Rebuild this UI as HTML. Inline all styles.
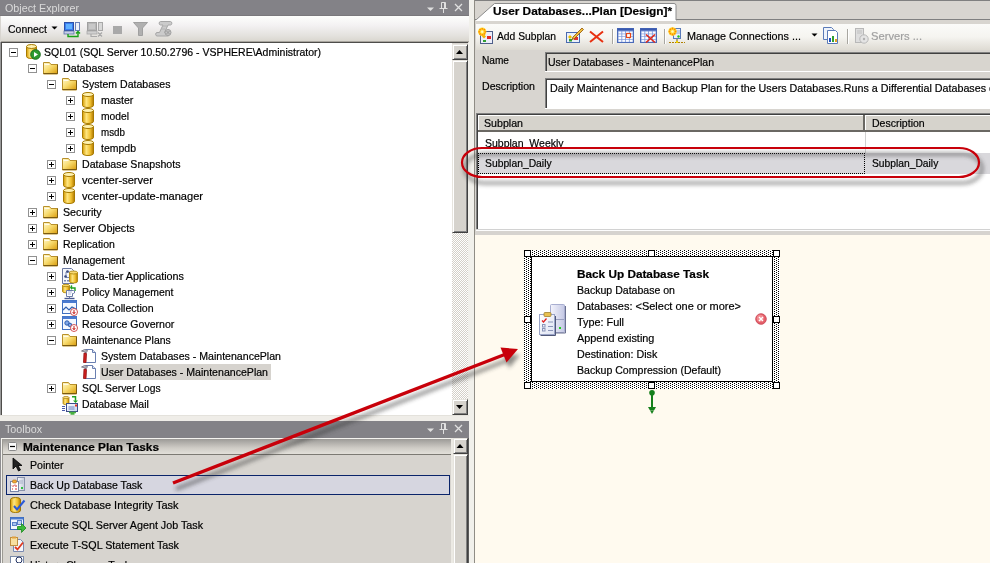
<!DOCTYPE html>
<html><head><meta charset="utf-8"><title>SSMS</title>
<style>
*{box-sizing:border-box;margin:0;padding:0}
html,body{width:990px;height:563px;overflow:hidden}
body{position:relative;background:#d8d5d0;font:11px "Liberation Sans",sans-serif;color:#000}
.a{position:absolute;display:block}
.t{position:absolute;white-space:nowrap;line-height:16px;height:16px;-webkit-text-stroke:0.2px currentColor}
</style></head><body>
<svg width="0" height="0" style="position:absolute">
<defs>
<linearGradient id="gFold" x1="0" y1="0" x2="1" y2="1"><stop offset="0" stop-color="#fff8d0"/><stop offset="0.45" stop-color="#f8dc70"/><stop offset="1" stop-color="#d89a08"/></linearGradient>
<linearGradient id="gCyl" x1="0" y1="0" x2="1" y2="0"><stop offset="0" stop-color="#d49a00"/><stop offset="0.35" stop-color="#ffe680"/><stop offset="0.7" stop-color="#f0c030"/><stop offset="1" stop-color="#b07800"/></linearGradient>
<pattern id="hatch" width="4" height="2" patternUnits="userSpaceOnUse"><rect width="4" height="2" fill="#fff"/><rect width="1" height="1" fill="#000"/><rect x="2" y="1" width="1" height="1" fill="#000"/></pattern>
<pattern id="chk" width="2" height="2" patternUnits="userSpaceOnUse"><rect width="2" height="2" fill="#fff"/><rect width="1" height="1" fill="#d4d0c8"/><rect x="1" y="1" width="1" height="1" fill="#d4d0c8"/></pattern>
<radialGradient id="gSun"><stop offset="0" stop-color="#fff080"/><stop offset="0.6" stop-color="#ffc820"/><stop offset="1" stop-color="#f08000"/></radialGradient>
<filter id="shd" x="-20%" y="-50%" width="140%" height="200%"><feGaussianBlur stdDeviation="2.2"/></filter>
</defs></svg>
<svg width="0" height="0" style="position:absolute"><defs>
<symbol id="ic_dtier" viewBox="0 0 16 16"><path d="M0.5 0.5h9l2 2v13h-11z" fill="#f4f6fb" stroke="#6a78a0"/><path d="M4 4v5.5h3M4 4h4" stroke="#7a88b0" fill="none"/><circle cx="5.5" cy="3.5" r="1.3" fill="#3a4a80"/><circle cx="3.5" cy="8.5" r="1.3" fill="#3a4a80"/><rect x="2" y="12" width="2" height="1.5" fill="#7a88b0"/><rect x="5" y="12" width="2" height="1.5" fill="#7a88b0"/><path d="M7.5 4.5v9a4 1.5 0 0 0 8 0v-9" fill="url(#gCyl)" stroke="#a88000" stroke-width="0.8"/><ellipse cx="11.5" cy="4.5" rx="4" ry="1.5" fill="#f8d870" stroke="#a88000" stroke-width="0.8"/></symbol>
<symbol id="ic_policy" viewBox="0 0 16 16"><path d="M0.5 1.5v6a3.5 1.3 0 0 0 7 0v-6" fill="url(#gCyl)" stroke="#a88000" stroke-width="0.8"/><ellipse cx="4" cy="1.5" rx="3.5" ry="1.2" fill="#f8d870" stroke="#a88000" stroke-width="0.8"/><path d="M9.5 1.5v2.5h3.5v3" stroke="#20a020" stroke-width="1.4" fill="none"/><path d="M8 3.5l2-2.5v5z" fill="#20a020"/><path d="M4.5 6.5h7c1.5 0 1.5 3 0 3h-1v3h-6z" fill="#fff" stroke="#6a7aa8"/><path d="M6 8h4M6 10h3" stroke="#a8b4d8"/><path d="M2.5 14.5h10" stroke="#4a5a90" stroke-width="1.4"/><path d="M7.5 12.5v2" stroke="#6a7aa8"/></symbol>
<symbol id="ic_dcoll" viewBox="0 0 16 16"><rect x="0.5" y="0.5" width="14" height="13" fill="#f4f8ff" stroke="#4070c0"/><rect x="0.5" y="0.5" width="14" height="2.5" fill="#4a7ad0"/><path d="M1 10l3-3l3 3l3-3l4 2" stroke="#3060b0" fill="none" stroke-width="1.2"/><circle cx="12" cy="12" r="3.5" fill="#fff" stroke="#d04040" stroke-width="0.9"/><path d="M12 10v3.5M10.7 12l1.3 1.8l1.3-1.8" stroke="#c82020" fill="none" stroke-width="1"/></symbol>
<symbol id="ic_rgov" viewBox="0 0 16 16"><rect x="0.5" y="0.5" width="14" height="13" fill="#f4f8ff" stroke="#4070c0"/><rect x="0.5" y="0.5" width="14" height="2.5" fill="#4a7ad0"/><circle cx="5" cy="7" r="2.2" fill="#80a8e8" stroke="#3060b0"/><circle cx="8" cy="9" r="1.8" fill="#80a8e8" stroke="#3060b0"/><circle cx="12" cy="12" r="3.5" fill="#fff" stroke="#d04040" stroke-width="0.9"/><path d="M12 10v3.5M10.7 12l1.3 1.8l1.3-1.8" stroke="#c82020" fill="none" stroke-width="1"/></symbol>
<symbol id="ic_plan" viewBox="0 0 16 16"><path d="M4.5 1.5h7l3 3v10h-10z" fill="#fff" stroke="#6a7fb0"/><path d="M11.5 1.5v3h3" fill="#dfe6f4" stroke="#6a7fb0"/><path d="M0.5 3l3-1.5l3 1l-1 2z" fill="#b8b8c0" stroke="#707080" stroke-width="0.8"/><path d="M3 5l-0.5 9.5h2.5l0.5-9z" fill="#d02020" stroke="#901010" stroke-width="0.8"/></symbol>
<symbol id="ic_mail" viewBox="0 0 16 19"><defs><linearGradient id="gMon" x1="0" y1="0" x2="1" y2="1"><stop offset="0" stop-color="#ffffff"/><stop offset="1" stop-color="#c8d4f0"/></linearGradient></defs><path d="M1 1.5v6a3 1.2 0 0 0 6 0v-6" fill="url(#gCyl)" stroke="#b08a20" stroke-width="0.8"/><ellipse cx="4" cy="1.5" rx="3" ry="1.1" fill="#f8dc80" stroke="#b08a20" stroke-width="0.8"/><path d="M10 0.8h3.5v4" stroke="#20a020" stroke-width="1.5" fill="none"/><path d="M11 4.5h5l-2.5 2.5z" fill="#20a020"/><rect x="4.5" y="7.5" width="11" height="8" fill="url(#gMon)" stroke="#3c4c88"/><rect x="13" y="8.5" width="2" height="2" fill="#e83020"/><path d="M6.5 11h6M6.5 13h6" stroke="#6a80c0"/><path d="M0 10.5h3M0 12.5h3M0 14.5h3" stroke="#4a5aa8"/><path d="M7 16.5h7M8.5 18h4" stroke="#48b040" stroke-width="1.4"/></symbol>
</defs></svg>
<div class="a" style="left:0px;top:0px;width:469px;height:16px;background:#838287"></div>
<div class="a" style="left:0px;top:15px;width:469px;height:1px;background:#7a787c"></div>
<svg class="a" style="left:425px;top:0px" width="44" height="16" viewBox="0 0 44 16"><path d="M2 7.5h7l-3.5 3.5z" fill="#e0e0e0"/><path d="M16.5 2.5h4v6h-4zM14.5 8.5h8M18.5 9v4" stroke="#e0e0e0" fill="none"/><path d="M19.5 3v5" stroke="#e0e0e0"/><path d="M30 4l7 7M37 4l-7 7" stroke="#e0e0e0" stroke-width="1.3"/></svg>
<div class="a" style="left:1px;top:16px;width:468px;height:26px;background:linear-gradient(#fdfefc,#f4f2f3 35%,#e4e2de 75%,#d8d5cd)"></div>
<div class="a" style="left:1px;top:41px;width:468px;height:1px;background:#a9a69f"></div>
<div class="a" style="left:0px;top:42px;width:468px;height:1px;background:#4e4d4a"></div>
<svg class="a" style="left:51px;top:26px" width="7" height="5" viewBox="0 0 7 5"><path d="M0.5 0.5h6l-3 3z" fill="#000"/></svg>
<svg class="a" style="left:63px;top:21px" width="19" height="17" viewBox="0 0 19 17"><rect x="1.5" y="1.5" width="9" height="8" fill="#3a7ef0" stroke="#2a4fa8"/><rect x="3" y="3" width="6" height="5" fill="#60b0ff"/><rect x="1" y="10" width="10" height="3" fill="#c8d0e8" stroke="#5a6fa8" stroke-width="0.8"/><rect x="12.5" y="1.5" width="4" height="8" fill="#eef2fa" stroke="#6a7fb8"/><path d="M5 13v2.5h10v-4M13 12.5l2 -2l2 2" stroke="#18a018" stroke-width="1.4" fill="none"/></svg>
<svg class="a" style="left:86px;top:21px" width="19" height="17" viewBox="0 0 19 17"><rect x="1.5" y="1.5" width="9" height="8" fill="#b8b8b8" stroke="#a0a0a0"/><rect x="3" y="3" width="6" height="5" fill="#c8c8c8"/><rect x="1" y="10" width="10" height="3" fill="#d0d0d0" stroke="#a8a8a8" stroke-width="0.8"/><rect x="12.5" y="1.5" width="4" height="8" fill="#d8d8d8" stroke="#a8a8a8"/><path d="M5 13v2.5h6M12 11.5l4 4M16 11.5l-4 4" stroke="#a8a8a8" stroke-width="1.2" fill="none"/></svg>
<div class="a" style="left:113px;top:26px;width:9px;height:8px;background:#a9a9a9"></div>
<svg class="a" style="left:133px;top:22px" width="16" height="14" viewBox="0 0 16 14"><path d="M0.5 0.5h14l-5 5.5v7.5h-4v-7.5z" fill="#b0b0b0" stroke="#a0a0a0"/></svg>
<svg class="a" style="left:155px;top:20px" width="18" height="18" viewBox="0 0 18 18"><path d="M5.5 1.5h10c1.8 0 1.8 3.5 0 3.5h-2.5l-3.5 7.5h3.5c1.8 0 1.8 3.5 0 3.5h-11c-1.8 0-1.8-3.5 0-3.5h2.5l3.5-7.5h-2.5c-1.8 0-1.8-3.5 0-3.5z" fill="#cbcbcb" stroke="#a6a6a6"/><path d="M7 6h5M6 9h4" stroke="#b4b4b4"/><circle cx="13" cy="12.5" r="3" fill="#c4c4c4" stroke="#a0a0a0"/><path d="M11.5 11l3 3M14.5 11l-3 3" stroke="#9a9a9a"/></svg>
<div class="a" style="left:0px;top:42px;width:1px;height:374px;background:#9a9a9a"></div>
<div class="a" style="left:1px;top:42px;width:1px;height:374px;background:#4e4d4a"></div>
<div class="a" style="left:2px;top:43px;width:450px;height:372px;background:#fff"></div>
<svg class="a" style="left:9px;top:48px" width="9" height="9" viewBox="0 0 9 9"><rect x="0.5" y="0.5" width="8" height="8" fill="#fff" stroke="#919191"/><path d="M2 4.5h5" stroke="#000"/></svg>
<svg class="a" style="left:25px;top:44px" width="17" height="17" viewBox="0 0 17 17"><path d="M1.5 2.5v10a5 2 0 0 0 10 0v-10" fill="url(#gCyl)" stroke="#a77a00"/><ellipse cx="6.5" cy="2.5" rx="5" ry="2" fill="#fff2b0" stroke="#a77a00"/><circle cx="10.5" cy="10.5" r="4.8" fill="#2f9a2f" stroke="#1c6e1c"/><path d="M9 8l4 2.5l-4 2.5z" fill="#fff"/></svg>
<svg class="a" style="left:28px;top:64px" width="9" height="9" viewBox="0 0 9 9"><rect x="0.5" y="0.5" width="8" height="8" fill="#fff" stroke="#919191"/><path d="M2 4.5h5" stroke="#000"/></svg>
<svg class="a" style="left:43px;top:62px" width="16" height="13" viewBox="0 0 16 13"><path d="M0.5 0.5h6l1.5 2h6.5v9.5h-14z" fill="url(#gFold)" stroke="#b8902a"/><path d="M0.5 11.5h14v-9" fill="none" stroke="#7a5a10"/><path d="M1.5 2.5h5" stroke="#fffbe8"/></svg>
<svg class="a" style="left:47px;top:80px" width="9" height="9" viewBox="0 0 9 9"><rect x="0.5" y="0.5" width="8" height="8" fill="#fff" stroke="#919191"/><path d="M2 4.5h5" stroke="#000"/></svg>
<svg class="a" style="left:62px;top:78px" width="16" height="13" viewBox="0 0 16 13"><path d="M0.5 0.5h6l1.5 2h6.5v9.5h-14z" fill="url(#gFold)" stroke="#b8902a"/><path d="M0.5 11.5h14v-9" fill="none" stroke="#7a5a10"/><path d="M1.5 2.5h5" stroke="#fffbe8"/></svg>
<svg class="a" style="left:66px;top:96px" width="9" height="9" viewBox="0 0 9 9"><rect x="0.5" y="0.5" width="8" height="8" fill="#fff" stroke="#919191"/><path d="M2 4.5h5" stroke="#000"/><path d="M4.5 2v5" stroke="#000"/></svg>
<svg class="a" style="left:82px;top:92px" width="12" height="16" viewBox="0 0 12 16"><path d="M0.5 2.5 v11 a5.5 2 0 0 0 11 0 v-11" fill="url(#gCyl)" stroke="#a77a00"/><ellipse cx="6.0" cy="2.5" rx="5.5" ry="2" fill="#fff2b0" stroke="#a77a00"/></svg>
<svg class="a" style="left:66px;top:112px" width="9" height="9" viewBox="0 0 9 9"><rect x="0.5" y="0.5" width="8" height="8" fill="#fff" stroke="#919191"/><path d="M2 4.5h5" stroke="#000"/><path d="M4.5 2v5" stroke="#000"/></svg>
<svg class="a" style="left:82px;top:108px" width="12" height="16" viewBox="0 0 12 16"><path d="M0.5 2.5 v11 a5.5 2 0 0 0 11 0 v-11" fill="url(#gCyl)" stroke="#a77a00"/><ellipse cx="6.0" cy="2.5" rx="5.5" ry="2" fill="#fff2b0" stroke="#a77a00"/></svg>
<svg class="a" style="left:66px;top:128px" width="9" height="9" viewBox="0 0 9 9"><rect x="0.5" y="0.5" width="8" height="8" fill="#fff" stroke="#919191"/><path d="M2 4.5h5" stroke="#000"/><path d="M4.5 2v5" stroke="#000"/></svg>
<svg class="a" style="left:82px;top:124px" width="12" height="16" viewBox="0 0 12 16"><path d="M0.5 2.5 v11 a5.5 2 0 0 0 11 0 v-11" fill="url(#gCyl)" stroke="#a77a00"/><ellipse cx="6.0" cy="2.5" rx="5.5" ry="2" fill="#fff2b0" stroke="#a77a00"/></svg>
<svg class="a" style="left:66px;top:144px" width="9" height="9" viewBox="0 0 9 9"><rect x="0.5" y="0.5" width="8" height="8" fill="#fff" stroke="#919191"/><path d="M2 4.5h5" stroke="#000"/><path d="M4.5 2v5" stroke="#000"/></svg>
<svg class="a" style="left:82px;top:140px" width="12" height="16" viewBox="0 0 12 16"><path d="M0.5 2.5 v11 a5.5 2 0 0 0 11 0 v-11" fill="url(#gCyl)" stroke="#a77a00"/><ellipse cx="6.0" cy="2.5" rx="5.5" ry="2" fill="#fff2b0" stroke="#a77a00"/></svg>
<svg class="a" style="left:47px;top:160px" width="9" height="9" viewBox="0 0 9 9"><rect x="0.5" y="0.5" width="8" height="8" fill="#fff" stroke="#919191"/><path d="M2 4.5h5" stroke="#000"/><path d="M4.5 2v5" stroke="#000"/></svg>
<svg class="a" style="left:62px;top:158px" width="16" height="13" viewBox="0 0 16 13"><path d="M0.5 0.5h6l1.5 2h6.5v9.5h-14z" fill="url(#gFold)" stroke="#b8902a"/><path d="M0.5 11.5h14v-9" fill="none" stroke="#7a5a10"/><path d="M1.5 2.5h5" stroke="#fffbe8"/></svg>
<svg class="a" style="left:47px;top:176px" width="9" height="9" viewBox="0 0 9 9"><rect x="0.5" y="0.5" width="8" height="8" fill="#fff" stroke="#919191"/><path d="M2 4.5h5" stroke="#000"/><path d="M4.5 2v5" stroke="#000"/></svg>
<svg class="a" style="left:63px;top:172px" width="12" height="16" viewBox="0 0 12 16"><path d="M0.5 2.5 v11 a5.5 2 0 0 0 11 0 v-11" fill="url(#gCyl)" stroke="#a77a00"/><ellipse cx="6.0" cy="2.5" rx="5.5" ry="2" fill="#fff2b0" stroke="#a77a00"/></svg>
<svg class="a" style="left:47px;top:192px" width="9" height="9" viewBox="0 0 9 9"><rect x="0.5" y="0.5" width="8" height="8" fill="#fff" stroke="#919191"/><path d="M2 4.5h5" stroke="#000"/><path d="M4.5 2v5" stroke="#000"/></svg>
<svg class="a" style="left:63px;top:188px" width="12" height="16" viewBox="0 0 12 16"><path d="M0.5 2.5 v11 a5.5 2 0 0 0 11 0 v-11" fill="url(#gCyl)" stroke="#a77a00"/><ellipse cx="6.0" cy="2.5" rx="5.5" ry="2" fill="#fff2b0" stroke="#a77a00"/></svg>
<svg class="a" style="left:28px;top:208px" width="9" height="9" viewBox="0 0 9 9"><rect x="0.5" y="0.5" width="8" height="8" fill="#fff" stroke="#919191"/><path d="M2 4.5h5" stroke="#000"/><path d="M4.5 2v5" stroke="#000"/></svg>
<svg class="a" style="left:43px;top:206px" width="16" height="13" viewBox="0 0 16 13"><path d="M0.5 0.5h6l1.5 2h6.5v9.5h-14z" fill="url(#gFold)" stroke="#b8902a"/><path d="M0.5 11.5h14v-9" fill="none" stroke="#7a5a10"/><path d="M1.5 2.5h5" stroke="#fffbe8"/></svg>
<svg class="a" style="left:28px;top:224px" width="9" height="9" viewBox="0 0 9 9"><rect x="0.5" y="0.5" width="8" height="8" fill="#fff" stroke="#919191"/><path d="M2 4.5h5" stroke="#000"/><path d="M4.5 2v5" stroke="#000"/></svg>
<svg class="a" style="left:43px;top:222px" width="16" height="13" viewBox="0 0 16 13"><path d="M0.5 0.5h6l1.5 2h6.5v9.5h-14z" fill="url(#gFold)" stroke="#b8902a"/><path d="M0.5 11.5h14v-9" fill="none" stroke="#7a5a10"/><path d="M1.5 2.5h5" stroke="#fffbe8"/></svg>
<svg class="a" style="left:28px;top:240px" width="9" height="9" viewBox="0 0 9 9"><rect x="0.5" y="0.5" width="8" height="8" fill="#fff" stroke="#919191"/><path d="M2 4.5h5" stroke="#000"/><path d="M4.5 2v5" stroke="#000"/></svg>
<svg class="a" style="left:43px;top:238px" width="16" height="13" viewBox="0 0 16 13"><path d="M0.5 0.5h6l1.5 2h6.5v9.5h-14z" fill="url(#gFold)" stroke="#b8902a"/><path d="M0.5 11.5h14v-9" fill="none" stroke="#7a5a10"/><path d="M1.5 2.5h5" stroke="#fffbe8"/></svg>
<svg class="a" style="left:28px;top:256px" width="9" height="9" viewBox="0 0 9 9"><rect x="0.5" y="0.5" width="8" height="8" fill="#fff" stroke="#919191"/><path d="M2 4.5h5" stroke="#000"/></svg>
<svg class="a" style="left:43px;top:254px" width="16" height="13" viewBox="0 0 16 13"><path d="M0.5 0.5h6l1.5 2h6.5v9.5h-14z" fill="url(#gFold)" stroke="#b8902a"/><path d="M0.5 11.5h14v-9" fill="none" stroke="#7a5a10"/><path d="M1.5 2.5h5" stroke="#fffbe8"/></svg>
<svg class="a" style="left:47px;top:272px" width="9" height="9" viewBox="0 0 9 9"><rect x="0.5" y="0.5" width="8" height="8" fill="#fff" stroke="#919191"/><path d="M2 4.5h5" stroke="#000"/><path d="M4.5 2v5" stroke="#000"/></svg>
<!--icon dtier 14-->
<svg class="a" style="left:62px;top:268px" width="16" height="16" viewBox="0 0 16 16"><use href="#ic_dtier" width="16" height="16"/></svg>
<svg class="a" style="left:47px;top:288px" width="9" height="9" viewBox="0 0 9 9"><rect x="0.5" y="0.5" width="8" height="8" fill="#fff" stroke="#919191"/><path d="M2 4.5h5" stroke="#000"/><path d="M4.5 2v5" stroke="#000"/></svg>
<!--icon policy 15-->
<svg class="a" style="left:62px;top:284px" width="16" height="16" viewBox="0 0 16 16"><use href="#ic_policy" width="16" height="16"/></svg>
<svg class="a" style="left:47px;top:304px" width="9" height="9" viewBox="0 0 9 9"><rect x="0.5" y="0.5" width="8" height="8" fill="#fff" stroke="#919191"/><path d="M2 4.5h5" stroke="#000"/><path d="M4.5 2v5" stroke="#000"/></svg>
<!--icon dcoll 16-->
<svg class="a" style="left:62px;top:300px" width="16" height="16" viewBox="0 0 16 16"><use href="#ic_dcoll" width="16" height="16"/></svg>
<svg class="a" style="left:47px;top:320px" width="9" height="9" viewBox="0 0 9 9"><rect x="0.5" y="0.5" width="8" height="8" fill="#fff" stroke="#919191"/><path d="M2 4.5h5" stroke="#000"/><path d="M4.5 2v5" stroke="#000"/></svg>
<!--icon rgov 17-->
<svg class="a" style="left:62px;top:316px" width="16" height="16" viewBox="0 0 16 16"><use href="#ic_rgov" width="16" height="16"/></svg>
<svg class="a" style="left:47px;top:336px" width="9" height="9" viewBox="0 0 9 9"><rect x="0.5" y="0.5" width="8" height="8" fill="#fff" stroke="#919191"/><path d="M2 4.5h5" stroke="#000"/></svg>
<svg class="a" style="left:62px;top:334px" width="16" height="13" viewBox="0 0 16 13"><path d="M0.5 0.5h6l1.5 2h6.5v9.5h-14z" fill="url(#gFold)" stroke="#b8902a"/><path d="M0.5 11.5h14v-9" fill="none" stroke="#7a5a10"/><path d="M1.5 2.5h5" stroke="#fffbe8"/></svg>
<!--icon plan 19-->
<svg class="a" style="left:81px;top:348px" width="16" height="16" viewBox="0 0 16 16"><use href="#ic_plan" width="16" height="16"/></svg>
<!--icon plan 20-->
<svg class="a" style="left:81px;top:364px" width="16" height="16" viewBox="0 0 16 16"><use href="#ic_plan" width="16" height="16"/></svg>
<div class="a" style="left:100px;top:364px;width:171px;height:16px;background:#d6d3ce"></div>
<svg class="a" style="left:47px;top:384px" width="9" height="9" viewBox="0 0 9 9"><rect x="0.5" y="0.5" width="8" height="8" fill="#fff" stroke="#919191"/><path d="M2 4.5h5" stroke="#000"/><path d="M4.5 2v5" stroke="#000"/></svg>
<svg class="a" style="left:62px;top:382px" width="16" height="13" viewBox="0 0 16 13"><path d="M0.5 0.5h6l1.5 2h6.5v9.5h-14z" fill="url(#gFold)" stroke="#b8902a"/><path d="M0.5 11.5h14v-9" fill="none" stroke="#7a5a10"/><path d="M1.5 2.5h5" stroke="#fffbe8"/></svg>
<!--icon mail 22-->
<svg class="a" style="left:62px;top:396px" width="16" height="19" viewBox="0 0 16 19"><use href="#ic_mail" width="16" height="19"/></svg>
<svg class="a" style="left:452px;top:233px" width="16" height="166"><rect width="16" height="166" fill="url(#chk)"/></svg>
<div class="a" style="left:452px;top:44px;width:16px;height:16px;background:#d6d3cd;border:1px solid;border-color:#e6e4de #404040 #404040 #e6e4de;box-shadow:inset 1px 1px #fff,inset -1px -1px #808080"></div>
<svg class="a" style="left:452px;top:44px" width="16" height="16" viewBox="0 0 16 16"><path d="M4 10h7l-3.5-4z" fill="#000"/></svg>
<div class="a" style="left:452px;top:60px;width:16px;height:173px;background:#d6d3cd;border:1px solid;border-color:#e6e4de #404040 #404040 #e6e4de;box-shadow:inset 1px 1px #fff,inset -1px -1px #808080"></div>
<div class="a" style="left:452px;top:399px;width:16px;height:16px;background:#d6d3cd;border:1px solid;border-color:#e6e4de #404040 #404040 #e6e4de;box-shadow:inset 1px 1px #fff,inset -1px -1px #808080"></div>
<svg class="a" style="left:452px;top:399px" width="16" height="16" viewBox="0 0 16 16"><path d="M4 6h7l-3.5 4z" fill="#000"/></svg>
<div class="a" style="left:469px;top:0px;width:5px;height:563px;background:#f1f0eb"></div>
<div class="a" style="left:468px;top:43px;width:1px;height:372px;background:#f1f0eb"></div>
<div class="a" style="left:474px;top:0px;width:1px;height:563px;background:#8f8c85"></div>
<div class="a" style="left:0px;top:415px;width:469px;height:1px;background:#e4e2dc"></div>
<div class="a" style="left:0px;top:416px;width:469px;height:5px;background:#efede8"></div>
<div class="a" style="left:0px;top:421px;width:469px;height:17px;background:#838287"></div>
<svg class="a" style="left:425px;top:421px" width="44" height="16" viewBox="0 0 44 16"><path d="M2 7.5h7l-3.5 3.5z" fill="#e0e0e0"/><path d="M16.5 2.5h4v6h-4zM14.5 8.5h8M18.5 9v4" stroke="#e0e0e0" fill="none"/><path d="M19.5 3v5" stroke="#e0e0e0"/><path d="M30 4l7 7M37 4l-7 7" stroke="#e0e0e0" stroke-width="1.3"/></svg>
<div class="a" style="left:0px;top:438px;width:1px;height:125px;background:#8e8d90"></div>
<div class="a" style="left:1px;top:438px;width:1px;height:125px;background:#f4f3ef"></div>
<div class="a" style="left:2px;top:438px;width:1px;height:125px;background:#9c9a94"></div>
<div class="a" style="left:3px;top:438px;width:449px;height:125px;background:#d7d4cf"></div>
<div class="a" style="left:1px;top:438px;width:451px;height:1px;background:#f4f3ef"></div>
<div class="a" style="left:3px;top:439px;width:449px;height:15px;background:linear-gradient(#9c9a97,#cfccc6 60%,#e2e0da)"></div>
<div class="a" style="left:3px;top:454px;width:449px;height:1px;background:#7c7a74"></div>
<svg class="a" style="left:8px;top:442px" width="9" height="9" viewBox="0 0 9 9"><rect x="0.5" y="0.5" width="8" height="8" rx="1" fill="#fbfbfa" stroke="#8a8a8a"/><path d="M2 4.5h5" stroke="#000" stroke-width="1.2"/></svg>
<svg class="a" style="left:12px;top:457px" width="10" height="15" viewBox="0 0 10 15"><path d="M1 1v11l3-3l2.5 5l2-1l-2.5-4.5h4z" fill="#222" stroke="#000" stroke-width="0.8"/></svg>
<div class="a" style="left:6px;top:475px;width:444px;height:20px;background:#d6d6e0;border:1px solid #0a246a"></div>
<svg class="a" style="left:10px;top:477px" width="15" height="16" viewBox="0 0 15 16"><defs><linearGradient id="gTw" x1="0" x2="1"><stop offset="0" stop-color="#fafbfd"/><stop offset="1" stop-color="#c4cada"/></linearGradient></defs><rect x="7.5" y="0.5" width="7" height="13" fill="url(#gTw)" stroke="#8a92aa"/><path d="M9 4h4M9 6h4" stroke="#a8b0c8"/><rect x="11" y="10" width="2" height="2" fill="#30c040"/><rect x="0.5" y="4.5" width="8" height="10" fill="#fff" stroke="#7a86a8"/><rect x="2.5" y="3" width="4" height="3" rx="1" fill="#f0a838" stroke="#b07020" stroke-width="0.6"/><path d="M2 8.5l1 1l2-2M2 12h1M5 9h2M5 12h2" stroke="#d02828" fill="none"/></svg>
<svg class="a" style="left:9px;top:497px" width="17" height="16" viewBox="0 0 17 16"><path d="M1.5 2.5q0-2 5-2q5 0 5 2v11q0 2-5 2q-5 0-5-2z" fill="url(#gCyl)" stroke="#a07400"/><path d="M5 9l3 3.5l7.5-9" stroke="#2a5ad8" stroke-width="2" fill="none"/></svg>
<svg class="a" style="left:9px;top:516px" width="18" height="17" viewBox="0 0 18 17"><rect x="1.5" y="1.5" width="13" height="12" fill="#f2f6fd" stroke="#3a6ab8"/><rect x="1.5" y="1.5" width="13" height="2" fill="#4a7ad0"/><rect x="3.5" y="6.5" width="4" height="3" fill="#a8c4f0" stroke="#5a80c8"/><rect x="8.5" y="4.5" width="4" height="4" fill="#c8d8f4" stroke="#5a80c8"/><path d="M8.5 10.5h4v-3l4.5 4.5l-4.5 4.5v-3h-4z" fill="#3cba3c" stroke="#1a8a1a" stroke-width="0.8"/></svg>
<svg class="a" style="left:10px;top:536px" width="16" height="17" viewBox="0 0 16 17"><path d="M3.5 3.5h7l3 3v9h-10z" fill="#f4f6fb" stroke="#7a8ab0"/><rect x="0.5" y="1.5" width="7" height="8" fill="#f8e0a0" stroke="#c09040"/><rect x="2" y="0.5" width="4" height="2" fill="#e0a040"/><path d="M5 11l2.5 2.5l5.5-7" stroke="#e03a20" stroke-width="1.8" fill="none"/></svg>
<svg class="a" style="left:10px;top:556px" width="16" height="10" viewBox="0 0 16 10"><rect x="0.5" y="0.5" width="13" height="12" fill="#fff" stroke="#7a8aa8"/><circle cx="9" cy="4" r="3" fill="#fff" stroke="#203060"/></svg>
<div class="a" style="left:451px;top:438px;width:2px;height:125px;background:#eceae4"></div>
<div class="a" style="left:453px;top:438px;width:15px;height:16px;background:#d6d3cd;border:1px solid;border-color:#e6e4de #404040 #404040 #e6e4de;box-shadow:inset 1px 1px #fff,inset -1px -1px #808080"></div>
<svg class="a" style="left:453px;top:438px" width="15" height="16" viewBox="0 0 15 16"><path d="M3.5 10h7l-3.5-4z" fill="#000"/></svg>
<div class="a" style="left:453px;top:454px;width:15px;height:120px;background:#d6d3cd;border:1px solid;border-color:#e6e4de #404040 #404040 #e6e4de;box-shadow:inset 1px 1px #fff,inset -1px -1px #808080"></div>
<div class="a" style="left:468px;top:438px;width:1px;height:125px;background:#5a5a5a"></div>
<div class="a" style="left:475px;top:0px;width:515px;height:563px;background:#d8d5d0"></div>
<div class="a" style="left:475px;top:0px;width:515px;height:1px;background:#808080"></div>
<div class="a" style="left:475px;top:19px;width:515px;height:1px;background:#808080"></div>
<svg class="a" style="left:475px;top:2px" width="205" height="19" viewBox="0 0 205 19"><path d="M1.5 17.5L19.5 1.5h179.5a2 2 0 0 1 2 2v15H1.5z" fill="#fff" stroke="#8c8c8c"/><path d="M1 18.5h200" stroke="#fff"/></svg>
<div class="a" style="left:476px;top:24px;width:514px;height:26px;background:linear-gradient(#fbfbf9,#f5f4f0 50%,#dedbd3)"></div>
<svg class="a" style="left:477px;top:27px" width="17" height="17" viewBox="0 0 17 17"><rect x="3.5" y="4.5" width="12" height="12" fill="#eceefa" stroke="#4e5e88"/><circle cx="5.2" cy="4.8" r="4.2" fill="#ffe030"/><circle cx="8.20" cy="4.80" r="0.9" fill="#ff8800"/><circle cx="7.32" cy="6.92" r="0.9" fill="#ff8800"/><circle cx="5.20" cy="7.80" r="0.9" fill="#ff8800"/><circle cx="3.08" cy="6.92" r="0.9" fill="#ff8800"/><circle cx="2.20" cy="4.80" r="0.9" fill="#ff8800"/><circle cx="3.08" cy="2.68" r="0.9" fill="#ff8800"/><circle cx="5.20" cy="1.80" r="0.9" fill="#ff8800"/><circle cx="7.32" cy="2.68" r="0.9" fill="#ff8800"/><circle cx="5.2" cy="4.8" r="1.2" fill="#fff8c0"/><path d="M7 7.5l2 2l-2 2l-2-2z" fill="#f0b800"/><rect x="6" y="13" width="3" height="2" fill="#30a030"/><rect x="10" y="9" width="4" height="3" fill="#e02828"/></svg>
<svg class="a" style="left:566px;top:27px" width="18" height="17" viewBox="0 0 18 17"><rect x="0.5" y="5.5" width="13" height="10" fill="#eaf0fa" stroke="#4a6ab0"/><path d="M4 8l2 2l-2 2l-2-2z" fill="#f0c000"/><rect x="3" y="12" width="3" height="2.5" fill="#30a030"/><rect x="8" y="10" width="4" height="3" fill="#e03030"/><path d="M7 10l9-9l1.5 1.5l-9 9l-2.5 1z" fill="#f0c040" stroke="#905000" stroke-width="0.8"/></svg>
<svg class="a" style="left:588px;top:30px" width="17" height="13" viewBox="0 0 17 13"><path d="M2 1.5l13 10.5M15 1.5l-13 10.5" stroke="#e83010" stroke-width="2"/></svg>
<div class="a" style="left:612px;top:29px;width:1px;height:15px;background:#a8a6a0"></div>
<div class="a" style="left:613px;top:29px;width:1px;height:15px;background:#fff"></div>
<svg class="a" style="left:617px;top:28px" width="17" height="16" viewBox="0 0 17 16"><rect x="0.5" y="0.5" width="16" height="14" fill="#7c98dc" stroke="#4a6ab8"/><rect x="0.5" y="0.5" width="16" height="2" fill="#3a5ab0"/><rect x="1.50" y="3.50" width="2.9" height="2.1" fill="#fbfcff"/><rect x="1.50" y="6.25" width="2.9" height="2.1" fill="#fbfcff"/><rect x="1.50" y="9.00" width="2.9" height="2.1" fill="#fbfcff"/><rect x="1.50" y="11.75" width="2.9" height="2.1" fill="#fbfcff"/><rect x="5.25" y="3.50" width="2.9" height="2.1" fill="#fbfcff"/><rect x="5.25" y="6.25" width="2.9" height="2.1" fill="#fbfcff"/><rect x="5.25" y="9.00" width="2.9" height="2.1" fill="#fbfcff"/><rect x="5.25" y="11.75" width="2.9" height="2.1" fill="#fbfcff"/><rect x="9.00" y="3.50" width="2.9" height="2.1" fill="#fbfcff"/><rect x="9.00" y="6.25" width="2.9" height="2.1" fill="#fbfcff"/><rect x="9.00" y="9.00" width="2.9" height="2.1" fill="#fbfcff"/><rect x="9.00" y="11.75" width="2.9" height="2.1" fill="#fbfcff"/><rect x="12.75" y="3.50" width="2.9" height="2.1" fill="#fbfcff"/><rect x="12.75" y="6.25" width="2.9" height="2.1" fill="#fbfcff"/><rect x="12.75" y="9.00" width="2.9" height="2.1" fill="#fbfcff"/><rect x="12.75" y="11.75" width="2.9" height="2.1" fill="#fbfcff"/><rect x="9.5" y="5.5" width="4" height="4" fill="#fff" stroke="#e84818" stroke-width="1.2"/></svg>
<svg class="a" style="left:640px;top:28px" width="17" height="16" viewBox="0 0 17 16"><rect x="0.5" y="0.5" width="16" height="14" fill="#7c98dc" stroke="#4a6ab8"/><rect x="0.5" y="0.5" width="16" height="2" fill="#3a5ab0"/><rect x="1.50" y="3.50" width="2.9" height="2.1" fill="#fbfcff"/><rect x="1.50" y="6.25" width="2.9" height="2.1" fill="#fbfcff"/><rect x="1.50" y="9.00" width="2.9" height="2.1" fill="#fbfcff"/><rect x="1.50" y="11.75" width="2.9" height="2.1" fill="#fbfcff"/><rect x="5.25" y="3.50" width="2.9" height="2.1" fill="#fbfcff"/><rect x="5.25" y="6.25" width="2.9" height="2.1" fill="#fbfcff"/><rect x="5.25" y="9.00" width="2.9" height="2.1" fill="#fbfcff"/><rect x="5.25" y="11.75" width="2.9" height="2.1" fill="#fbfcff"/><rect x="9.00" y="3.50" width="2.9" height="2.1" fill="#fbfcff"/><rect x="9.00" y="6.25" width="2.9" height="2.1" fill="#fbfcff"/><rect x="9.00" y="9.00" width="2.9" height="2.1" fill="#fbfcff"/><rect x="9.00" y="11.75" width="2.9" height="2.1" fill="#fbfcff"/><rect x="12.75" y="3.50" width="2.9" height="2.1" fill="#fbfcff"/><rect x="12.75" y="6.25" width="2.9" height="2.1" fill="#fbfcff"/><rect x="12.75" y="9.00" width="2.9" height="2.1" fill="#fbfcff"/><rect x="12.75" y="11.75" width="2.9" height="2.1" fill="#fbfcff"/><path d="M6 6.5l9 8M15 6.5l-9 8" stroke="#e02818" stroke-width="1.6"/></svg>
<div class="a" style="left:664px;top:29px;width:1px;height:15px;background:#a8a6a0"></div>
<div class="a" style="left:665px;top:29px;width:1px;height:15px;background:#fff"></div>
<svg class="a" style="left:668px;top:27px" width="18" height="17" viewBox="0 0 18 17"><rect x="5.5" y="1.5" width="7" height="10" fill="#eaf0fa" stroke="#5a7ab8"/><path d="M6 4h6M6 6h6" stroke="#90a8d8"/><circle cx="10.5" cy="9.5" r="1.2" fill="#20c020"/><circle cx="4.5" cy="4.5" r="4.2" fill="#ffe030"/><circle cx="7.50" cy="4.50" r="0.9" fill="#ff8800"/><circle cx="6.62" cy="6.62" r="0.9" fill="#ff8800"/><circle cx="4.50" cy="7.50" r="0.9" fill="#ff8800"/><circle cx="2.38" cy="6.62" r="0.9" fill="#ff8800"/><circle cx="1.50" cy="4.50" r="0.9" fill="#ff8800"/><circle cx="2.38" cy="2.38" r="0.9" fill="#ff8800"/><circle cx="4.50" cy="1.50" r="0.9" fill="#ff8800"/><circle cx="6.62" cy="2.38" r="0.9" fill="#ff8800"/><circle cx="4.5" cy="4.5" r="1.2" fill="#fff8c0"/><path d="M1 15.5h16" stroke="#b08000" stroke-dasharray="2 1"/><path d="M9 12v3" stroke="#806000"/><rect x="8" y="14" width="2" height="2" fill="#f0d000"/></svg>
<svg class="a" style="left:811px;top:33px" width="7" height="4" viewBox="0 0 7 4"><path d="M0.5 0.5h6l-3 3z" fill="#000"/></svg>
<svg class="a" style="left:823px;top:27px" width="17" height="17" viewBox="0 0 17 17"><path d="M0.5 0.5h8l2 2v10h-10z" fill="#eef3fb" stroke="#5a7ab8"/><path d="M4.5 3.5h8l2 2v11h-10z" fill="#fff" stroke="#5a7ab8"/><rect x="6" y="11" width="2" height="4" fill="#2050c0"/><rect x="9" y="9" width="2" height="6" fill="#30a030"/><rect x="12" y="12" width="2" height="3" fill="#e0a020"/></svg>
<div class="a" style="left:847px;top:29px;width:1px;height:15px;background:#a8a6a0"></div>
<div class="a" style="left:848px;top:29px;width:1px;height:15px;background:#fff"></div>
<svg class="a" style="left:855px;top:28px" width="14" height="16" viewBox="0 0 14 16"><rect x="0.5" y="0.5" width="8" height="14" fill="#dedede" stroke="#b8b8b8"/><path d="M2 3h5M2 5h5" stroke="#c0c0c0"/><circle cx="9" cy="11" r="4.2" fill="#e4e4e4" stroke="#b8b8b8"/><circle cx="9" cy="11" r="1.2" fill="#b0b0b0"/></svg>
<div class="a" style="left:545px;top:52px;width:450px;height:19px;background:#d8d5cf;border-top:1px solid #808080;border-left:1px solid #808080;box-shadow:inset 1px 1px #404040"></div>
<div class="a" style="left:545px;top:71px;width:450px;height:1px;background:#fff"></div>
<div class="a" style="left:545px;top:78px;width:450px;height:30px;background:#fff;border-top:1px solid #808080;border-left:1px solid #808080;box-shadow:inset 1px 1px #404040"></div>
<div class="a" style="left:545px;top:108px;width:450px;height:1px;background:#fff"></div>
<div class="a" style="left:476px;top:113px;width:520px;height:116px;background:#fff;border-top:1px solid #808080;border-left:1px solid #808080;box-shadow:inset 1px 1px #404040"></div>
<div class="a" style="left:478px;top:115px;width:387px;height:17px;background:#d6d3cc;border-bottom:2px solid #6a6863;border-right:2px solid #6a6863;box-shadow:inset 1px 1px #fff"></div>
<div class="a" style="left:865px;top:115px;width:130px;height:17px;background:#d6d3cc;border-bottom:2px solid #6a6863;box-shadow:inset 1px 1px #fff"></div>
<div class="a" style="left:865px;top:132px;width:1px;height:41px;background:#d0d0d0"></div>
<div class="a" style="left:478px;top:153px;width:512px;height:21px;background:#d9d8dc"></div>
<div class="a" style="left:478px;top:153px;width:387px;height:21px;border:1px dotted #000"></div>
<div class="a" style="left:477px;top:229px;width:514px;height:1px;background:#d2d2d2"></div>
<div class="a" style="left:476px;top:230px;width:514px;height:1px;background:#fdfdfd"></div>
<div class="a" style="left:476px;top:231px;width:514px;height:4px;background:#d6d3cf"></div>
<div class="a" style="left:475px;top:235px;width:515px;height:328px;background:#fffaef"></div>
<svg class="a" style="left:524px;top:250px" width="257" height="140"><rect x="0" y="0" width="256" height="139" fill="url(#hatch)"/><rect x="7.5" y="6.5" width="241" height="125" fill="#fff" stroke="#000"/><rect x="0.5" y="0.5" width="6" height="6" fill="#fff" stroke="#000"/><rect x="0.5" y="66.5" width="6" height="6" fill="#fff" stroke="#000"/><rect x="0.5" y="132.5" width="6" height="6" fill="#fff" stroke="#000"/><rect x="124.5" y="0.5" width="6" height="6" fill="#fff" stroke="#000"/><rect x="124.5" y="132.5" width="6" height="6" fill="#fff" stroke="#000"/><rect x="249.5" y="0.5" width="6" height="6" fill="#fff" stroke="#000"/><rect x="249.5" y="66.5" width="6" height="6" fill="#fff" stroke="#000"/><rect x="249.5" y="132.5" width="6" height="6" fill="#fff" stroke="#000"/></svg>
<svg class="a" style="left:538px;top:302px" width="30" height="34" viewBox="0 0 30 34"><defs><linearGradient id="gTw2" x1="0" x2="1"><stop offset="0" stop-color="#f4f4fc"/><stop offset="1" stop-color="#c4c8e4"/></linearGradient><linearGradient id="gCb" x1="0" y1="0" x2="1" y2="1"><stop offset="0" stop-color="#ffffff"/><stop offset="1" stop-color="#dde2f2"/></linearGradient></defs><rect x="12.5" y="2.5" width="14" height="28" rx="1" fill="url(#gTw2)" stroke="#a8aed0"/><path d="M27.5 4v27h-14" stroke="#6a7090" fill="none"/><path d="M13 17.5h13" stroke="#9aa0c0"/><rect x="21" y="25" width="2" height="2" fill="#20d020"/><rect x="1.5" y="12.5" width="15" height="20" fill="url(#gCb)" stroke="#9aa4c8"/><path d="M17.5 14v19.5h-15" stroke="#505878" fill="none"/><rect x="6" y="10.5" width="7" height="4" rx="1" fill="#e8c050" stroke="#a08030" stroke-width="0.8"/><path d="M4 18.5l1.5 1.5l3-3.5" stroke="#e02020" fill="none" stroke-width="1.3"/><path d="M10 20h5M10 24.5h5M10 28.5h5" stroke="#8a94b8"/><rect x="4.5" y="22.5" width="2.5" height="2.5" fill="none" stroke="#8a94b8"/><rect x="4.5" y="26.5" width="2.5" height="2.5" fill="none" stroke="#8a94b8"/></svg>
<svg class="a" style="left:754px;top:312px" width="14" height="14" viewBox="0 0 14 14"><circle cx="7" cy="7" r="5.3" fill="#e4606a" stroke="#c84050" stroke-width="0.8"/><circle cx="6.3" cy="6.3" r="3.5" fill="#f28a90"/><path d="M5 5l4 4M9 5l-4 4" stroke="#fff" stroke-width="1.4"/></svg>
<svg class="a" style="left:645px;top:386px" width="14" height="30" viewBox="0 0 14 30"><path d="M7 7v14" stroke="#16801c" stroke-width="2"/><circle cx="7" cy="6.8" r="2.8" fill="#16801c"/><path d="M3 21h8l-4 7z" fill="#16801c"/><path d="M4 24.5h6" stroke="#fffaef" stroke-width="0.6" opacity="0.5"/></svg>
<div class="t" style="left:5px;top:0px;transform:scaleX(0.9761);transform-origin:0 0;color:#dadada;-webkit-text-stroke:0">Object Explorer</div>
<div class="t" style="left:8px;top:21px;transform:scaleX(0.9516);transform-origin:0 0;">Connect</div>
<div class="t" style="left:44px;top:44px;transform:scaleX(0.9552);transform-origin:0 0;">SQL01 (SQL Server 10.50.2796 - VSPHERE\Administrator)</div>
<div class="t" style="left:63px;top:60px;transform:scaleX(0.9697);transform-origin:0 0;">Databases</div>
<div class="t" style="left:82px;top:76px;transform:scaleX(0.9585);transform-origin:0 0;">System Databases</div>
<div class="t" style="left:101px;top:92px;transform:scaleX(0.9606);transform-origin:0 0;">master</div>
<div class="t" style="left:101px;top:108px;transform:scaleX(0.9343);transform-origin:0 0;">model</div>
<div class="t" style="left:101px;top:124px;transform:scaleX(0.8920);transform-origin:0 0;">msdb</div>
<div class="t" style="left:101px;top:140px;transform:scaleX(0.9536);transform-origin:0 0;">tempdb</div>
<div class="t" style="left:82px;top:156px;transform:scaleX(0.9644);transform-origin:0 0;">Database Snapshots</div>
<div class="t" style="left:82px;top:172px;transform:scaleX(1.0100);transform-origin:0 0;">vcenter-server</div>
<div class="t" style="left:82px;top:188px;transform:scaleX(1.0044);transform-origin:0 0;">vcenter-update-manager</div>
<div class="t" style="left:63px;top:204px;transform:scaleX(0.9711);transform-origin:0 0;">Security</div>
<div class="t" style="left:63px;top:220px;transform:scaleX(0.9856);transform-origin:0 0;">Server Objects</div>
<div class="t" style="left:63px;top:236px;transform:scaleX(0.9518);transform-origin:0 0;">Replication</div>
<div class="t" style="left:63px;top:252px;transform:scaleX(0.9608);transform-origin:0 0;">Management</div>
<div class="t" style="left:82px;top:268px;transform:scaleX(0.9812);transform-origin:0 0;">Data-tier Applications</div>
<div class="t" style="left:82px;top:284px;transform:scaleX(0.9471);transform-origin:0 0;">Policy Management</div>
<div class="t" style="left:82px;top:300px;transform:scaleX(0.9599);transform-origin:0 0;">Data Collection</div>
<div class="t" style="left:82px;top:316px;transform:scaleX(0.9625);transform-origin:0 0;">Resource Governor</div>
<div class="t" style="left:82px;top:332px;transform:scaleX(0.9480);transform-origin:0 0;">Maintenance Plans</div>
<div class="t" style="left:101px;top:348px;transform:scaleX(0.9620);transform-origin:0 0;">System Databases - MaintenancePlan</div>
<div class="t" style="left:101px;top:364px;transform:scaleX(0.9617);transform-origin:0 0;">User Databases - MaintenancePlan</div>
<div class="t" style="left:82px;top:380px;transform:scaleX(0.9373);transform-origin:0 0;">SQL Server Logs</div>
<div class="t" style="left:82px;top:396px;transform:scaleX(0.9498);transform-origin:0 0;">Database Mail</div>
<div class="t" style="left:5px;top:421px;transform:scaleX(0.9757);transform-origin:0 0;color:#dadada;-webkit-text-stroke:0">Toolbox</div>
<div class="t" style="left:23px;top:439px;transform:scaleX(1.0763);transform-origin:0 0;font-weight:bold">Maintenance Plan Tasks</div>
<div class="t" style="left:30px;top:457px;transform:scaleX(0.9610);transform-origin:0 0;">Pointer</div>
<div class="t" style="left:30px;top:477px;transform:scaleX(0.9582);transform-origin:0 0;">Back Up Database Task</div>
<div class="t" style="left:30px;top:497px;transform:scaleX(0.9967);transform-origin:0 0;">Check Database Integrity Task</div>
<div class="t" style="left:30px;top:517px;transform:scaleX(0.9756);transform-origin:0 0;">Execute SQL Server Agent Job Task</div>
<div class="t" style="left:30px;top:537px;transform:scaleX(0.9760);transform-origin:0 0;">Execute T-SQL Statement Task</div>
<div class="t" style="left:30px;top:557px;transform:scaleX(0.9640);transform-origin:0 0;">History Cleanup Task</div>
<div class="t" style="left:493px;top:3px;transform:scaleX(1.0764);transform-origin:0 0;font-weight:bold">User Databases...Plan [Design]*</div>
<div class="t" style="left:497px;top:28px;transform:scaleX(0.9365);transform-origin:0 0;">Add Subplan</div>
<div class="t" style="left:687px;top:28px;transform:scaleX(0.9812);transform-origin:0 0;">Manage Connections ...</div>
<div class="t" style="left:871px;top:28px;transform:scaleX(1.0175);transform-origin:0 0;color:#a0a0a0">Servers ...</div>
<div class="t" style="left:482px;top:52px;transform:scaleX(0.9201);transform-origin:0 0;">Name</div>
<div class="t" style="left:548px;top:54px;transform:scaleX(0.9559);transform-origin:0 0;">User Databases - MaintenancePlan</div>
<div class="t" style="left:482px;top:78px;transform:scaleX(0.9631);transform-origin:0 0;">Description</div>
<div class="t" style="left:550px;top:80px;transform:scaleX(0.9747);transform-origin:0 0;">Daily Maintenance and Backup Plan for the Users Databases.Runs a Differential Databases o</div>
<div class="t" style="left:484px;top:115px;transform:scaleX(0.9659);transform-origin:0 0;">Subplan</div>
<div class="t" style="left:872px;top:115px;transform:scaleX(0.9576);transform-origin:0 0;">Description</div>
<div class="t" style="left:485px;top:135px;transform:scaleX(0.9544);transform-origin:0 0;">Subplan_Weekly</div>
<div class="t" style="left:485px;top:155px;transform:scaleX(0.9389);transform-origin:0 0;">Subplan_Daily</div>
<div class="t" style="left:872px;top:155px;transform:scaleX(0.9346);transform-origin:0 0;">Subplan_Daily</div>
<div class="t" style="left:577px;top:266px;transform:scaleX(1.0705);transform-origin:0 0;font-weight:bold">Back Up Database Task</div>
<div class="t" style="left:577px;top:282px;transform:scaleX(0.9595);transform-origin:0 0;">Backup Database on</div>
<div class="t" style="left:577px;top:298px;transform:scaleX(0.9971);transform-origin:0 0;">Databases: &lt;Select one or more&gt;</div>
<div class="t" style="left:577px;top:314px;transform:scaleX(0.9856);transform-origin:0 0;">Type: Full</div>
<div class="t" style="left:577px;top:330px;transform:scaleX(0.9887);transform-origin:0 0;">Append existing</div>
<div class="t" style="left:577px;top:346px;transform:scaleX(0.9728);transform-origin:0 0;">Destination: Disk</div>
<div class="t" style="left:577px;top:362px;transform:scaleX(0.9613);transform-origin:0 0;">Backup Compression (Default)</div>
<svg class="a" style="left:0;top:0" width="990" height="563"><g filter="url(#shd)" opacity="0.55" transform="translate(3,6)"><rect x="462" y="148" width="517" height="29" rx="20" ry="15" fill="none" stroke="#303030" stroke-width="3"/><path d="M173 483L505 354" stroke="#303030" stroke-width="3.5"/><path d="M517 349L501 348L506 362z" fill="#303030"/></g><rect x="462" y="148" width="517" height="29" rx="20" ry="15" fill="none" stroke="#c8000a" stroke-width="2.2"/><path d="M173 483L506 354" stroke="#c8000a" stroke-width="3.4"/><path d="M518 349L500.5 347.5L506.5 362.5z" fill="#c8000a"/></svg>
</body></html>
